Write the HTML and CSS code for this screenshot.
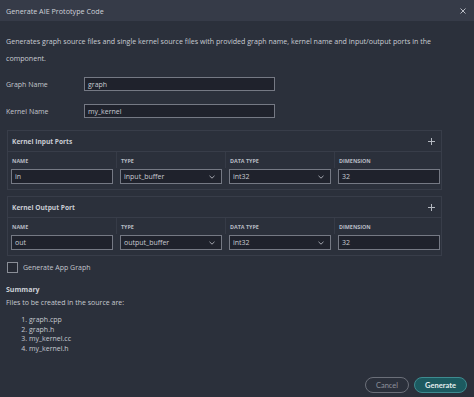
FILE: index.html
```html
<!DOCTYPE html>
<html>
<head>
<meta charset="utf-8">
<link rel="stylesheet" href="styles.css">
</head>
<body>
<div class="dialog">
  <div class="titlebar">
    <span class="title">Generate AIE Prototype Code</span>
    <svg class="close" width="6" height="6" viewBox="0 0 6 6"><path d="M0.5 0.5L5.5 5.5M5.5 0.5L0.5 5.5" stroke="#b9bcc4" stroke-width="1"/></svg>
  </div>
  <div class="content">
    <p class="desc">Generates graph source files and single kernel source files with provided graph name, kernel name and input/output ports in the component.</p>
    <div class="field first">
      <label class="flabel">Graph Name</label>
      <div class="input wide">graph</div>
    </div>
    <div class="field">
      <label class="flabel">Kernel Name</label>
      <div class="input wide">my_kernel</div>
    </div>

    <div class="panel first-panel">
      <div class="phead">
        <span class="ptitle">Kernel Input Ports</span>
        <svg class="plus" width="7" height="7" viewBox="0 0 7 7"><path d="M3.5 0V7M0 3.5H7" stroke="#b4b8c0" stroke-width="1"/></svg>
      </div>
      <div class="grid">
        <div class="col">NAME</div>
        <div class="col sep">TYPE</div>
        <div class="col sep">DATA TYPE</div>
        <div class="col sep">DIMENSION</div>
        <div class="input">in</div>
        <div class="input select">input_buffer<svg class="chev" width="6" height="4" viewBox="0 0 6 4"><path d="M0.5 0.8L3 3.2L5.5 0.8" fill="none" stroke="#b4b8c0" stroke-width="0.9"/></svg></div>
        <div class="input select">int32<svg class="chev" width="6" height="4" viewBox="0 0 6 4"><path d="M0.5 0.8L3 3.2L5.5 0.8" fill="none" stroke="#b4b8c0" stroke-width="0.9"/></svg></div>
        <div class="input">32</div>
      </div>
    </div>

    <div class="panel">
      <div class="phead">
        <span class="ptitle">Kernel Output Port</span>
        <svg class="plus" width="7" height="7" viewBox="0 0 7 7"><path d="M3.5 0V7M0 3.5H7" stroke="#b4b8c0" stroke-width="1"/></svg>
      </div>
      <div class="grid">
        <div class="col">NAME</div>
        <div class="col sep">TYPE</div>
        <div class="col sep">DATA TYPE</div>
        <div class="col sep">DIMENSION</div>
        <div class="input">out</div>
        <div class="input select">output_buffer<svg class="chev" width="6" height="4" viewBox="0 0 6 4"><path d="M0.5 0.8L3 3.2L5.5 0.8" fill="none" stroke="#b4b8c0" stroke-width="0.9"/></svg></div>
        <div class="input select">int32<svg class="chev" width="6" height="4" viewBox="0 0 6 4"><path d="M0.5 0.8L3 3.2L5.5 0.8" fill="none" stroke="#b4b8c0" stroke-width="0.9"/></svg></div>
        <div class="input">32</div>
      </div>
    </div>

    <div class="check">
      <span class="box"></span>
      <span class="clabel">Generate App Graph</span>
    </div>

    <div class="summary">Summary</div>
    <div class="files">Files to be created in the source are:</div>
    <ol class="list">
      <li>graph.cpp</li>
      <li>graph.h</li>
      <li>my_kernel.cc</li>
      <li>my_kernel.h</li>
    </ol>
  </div>
  <div class="footer">
    <button class="btn cancel">Cancel</button>
    <button class="btn generate">Generate</button>
  </div>
</div>
</body>
</html>
```
FILE: styles.css
```css
html, body {
  margin: 0;
  padding: 0;
  background: #2b303b;
}
.dialog {
  width: 474px;
  height: 397px;
  display: flex;
  flex-direction: column;
  background: #2b303b;
  font-family: "Open Sans", "Noto Sans", sans-serif;
  color: #c6c9d0;
  font-size: 7px;
  box-sizing: border-box;
}
.titlebar {
  height: 21px;
  flex: none;
  background: #363b48;
  display: flex;
  align-items: center;
  justify-content: space-between;
  padding: 0 8px 0 6px;
  box-sizing: border-box;
}
.title {
  font-size: 7.2px;
  color: #cfd2d9;
}
.content {
  padding: 0 6px;
}
.desc {
  margin: 12px 0 0 0;
  width: 432px;
  line-height: 17px;
  font-size: 7.1px;
  color: #c9ccd3;
}
.field {
  display: flex;
  align-items: center;
  margin-top: 13px;
}
.field.first {
  margin-top: 10px;
}
.flabel {
  width: 78px;
  color: #c3c6cd;
}
.input {
  height: 15px;
  box-sizing: border-box;
  background: #1f222c;
  border: 1px solid #757984;
  color: #c8cbd2;
  padding: 0 3px;
  display: flex;
  align-items: center;
  justify-content: space-between;
  font-size: 7px;
}
.input.wide {
  width: 191px;
  height: 14px;
}
.chev {
  margin-right: 3px;
}
.panel {
  margin: 6px 1px 0 1px;
  width: 435px;
  height: 60px;
  box-sizing: border-box;
  border: 1px solid #383d49;
}
.panel.first-panel {
  margin-top: 12px;
}
.phead {
  height: 21px;
  box-sizing: border-box;
  border-bottom: 1px solid #383d49;
  display: flex;
  align-items: center;
  justify-content: space-between;
  padding: 0 6px 0 4px;
}
.ptitle {
  font-weight: 700;
  font-size: 6.6px;
  color: #c9ccd3;
}
.grid {
  display: grid;
  grid-template-columns: repeat(4, 102px);
  grid-template-rows: 12px 15px;
  column-gap: 7px;
  row-gap: 4px;
  padding: 1px 3px 0 3px;
}
.col {
  font-size: 5.4px;
  font-weight: 700;
  color: #b7bbc3;
  padding-left: 1px;
  display: flex;
  align-items: center;
  padding-top: 3px;
  position: relative;
}
.col.sep::before {
  content: "";
  position: absolute;
  left: -4px;
  top: -1px;
  bottom: -3px;
  width: 1px;
  background: #363b47;
}
.check {
  display: flex;
  align-items: center;
  margin-top: 6px;
  margin-left: 1px;
  height: 11px;
}
.box {
  width: 11px;
  height: 11px;
  box-sizing: border-box;
  border: 1px solid #8a8e97;
  background: #252933;
}
.clabel {
  margin-left: 5px;
  color: #c3c6cd;
}
.summary {
  margin-top: 12px;
  font-weight: 700;
  line-height: 10px;
  color: #cdd0d7;
}
.files {
  margin-top: 3px;
  line-height: 10px;
}
.list {
  margin: 7px 0 0 0;
  padding-left: 23px;
  line-height: 9.5px;
}
.footer {
  margin-top: auto;
  display: flex;
  justify-content: flex-end;
  gap: 5px;
  padding: 0 7px 4px 0;
}
.btn {
  height: 16px;
  border-radius: 8px;
  font-family: "Lato", "Open Sans", sans-serif;
  font-size: 7.5px;
  padding: 0;
  box-sizing: border-box;
}
.cancel {
  width: 44px;
  background: transparent;
  border: 1px solid #6b6f79;
  color: #8e929b;
}
.generate {
  width: 53px;
  background: #1c5a60;
  border: 1px solid #3e8b90;
  color: #e4eeef;
  font-weight: 700;
}
```
